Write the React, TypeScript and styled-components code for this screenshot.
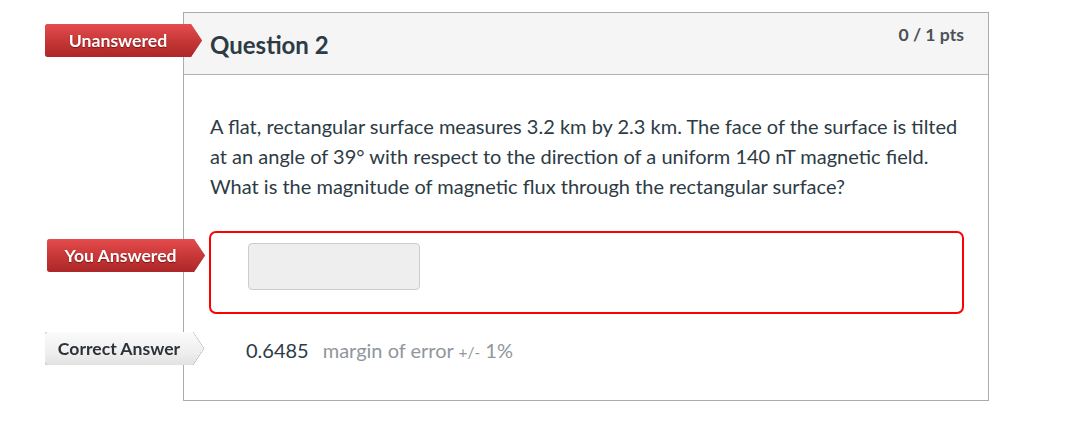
import React from "react";
import styled, { createGlobalStyle } from "styled-components";

const GlobalStyle = createGlobalStyle`
  html, body {
    margin: 0;
    padding: 0;
    background: #ffffff;
    font-family: Lato, "Open Sans", "Liberation Sans", sans-serif;
    color: #2d3b45;
  }
`;

const Page = styled.div`
  padding: 12px 0 0 183px;
`;

const QuestionBox = styled.div`
  width: 806px;
  box-sizing: border-box;
  border: 1px solid #ababab;
  background: #ffffff;
`;

const Header = styled.div`
  position: relative;
  height: 62px;
  box-sizing: border-box;
  background: #f5f5f5;
  border-bottom: 1px solid #b3b3b3;
  display: flex;
  justify-content: space-between;
  align-items: flex-start;
  padding: 0 24px 0 26px;
`;

const Title = styled.h2`
  margin: 0;
  padding-top: 17px;
  font-size: 24px;
  line-height: 30px;
  font-weight: 700;
  color: #2d3b45;
`;

const Points = styled.div`
  padding-top: 11px;
  font-size: 17.6px;
  line-height: 22px;
  font-weight: 700;
  color: #4a5258;
`;

const Tag = styled.div<{ $top: number; $left: number; $width: number; $variant: "red" | "gray" }>`
  position: absolute;
  top: ${(p) => p.$top}px;
  left: ${(p) => p.$left}px;
  width: ${(p) => p.$width}px;
  height: 33px;
  filter: ${(p) =>
    p.$variant === "gray"
      ? "drop-shadow(0 0 0.5px #777) drop-shadow(0 0 0.3px #999)"
      : "drop-shadow(0 0.5px 0.5px rgba(90,0,0,0.5))"};
`;

const TagShape = styled.div<{ $variant: "red" | "gray" }>`
  height: 100%;
  box-sizing: border-box;
  border-radius: 3px 0 0 3px;
  clip-path: polygon(0 0, calc(100% - 11px) 0, 100% 50%, calc(100% - 11px) 100%, 0 100%);
  background: ${(p) =>
    p.$variant === "red"
      ? "linear-gradient(#e54c4d, #c23434 60%, #ad2728)"
      : "linear-gradient(#fbfbfb, #efefef 60%, #e2e2e2)"};
  display: flex;
  align-items: center;
  padding-right: 11px;
`;

const TagText = styled.span<{ $variant: "red" | "gray" }>`
  flex: 1;
  text-align: center;
  font-size: 17.6px;
  font-weight: 700;
  color: ${(p) => (p.$variant === "red" ? "#ffffff" : "#2d3238")};
  text-shadow: ${(p) => (p.$variant === "red" ? "0 1px 1px rgba(80,0,0,0.6)" : "none")};
`;

const Body = styled.div`
  padding: 36px 0 33px 0;
`;

const QuestionText = styled.p`
  margin: 0 24px 0 26px;
  font-size: 20px;
  line-height: 30px;
  color: #2d3b45;
`;

const AnswerRow = styled.div`
  position: relative;
  margin-top: 30px;
  padding: 0 24px 0 25px;
`;

const AnswerBox = styled.div`
  height: 83px;
  box-sizing: border-box;
  border: 2px solid #ff0000;
  border-radius: 7px;
  padding: 10px 0 0 37px;
`;

const InputBox = styled.div`
  width: 172px;
  height: 47px;
  box-sizing: border-box;
  background: #eeeeee;
  border: 1px solid #cccccc;
  border-radius: 4px;
`;

const CorrectRow = styled.div`
  position: relative;
  margin-top: 19px;
  height: 34px;
  padding-left: 62px;
  display: flex;
  align-items: center;
  font-size: 20px;
`;

const Value = styled.span`
  color: #2d3b45;
  margin-right: 14px;
`;

const Margin = styled.span`
  color: #8f969c;
`;

const Small = styled.span`
  font-size: 15.4px;
`;

function Label({
  text,
  top,
  left,
  width,
  variant,
}: {
  text: string;
  top: number;
  left: number;
  width: number;
  variant: "red" | "gray";
}) {
  return (
    <Tag $top={top} $left={left} $width={width} $variant={variant}>
      <TagShape $variant={variant}>
        <TagText $variant={variant}>{text}</TagText>
      </TagShape>
    </Tag>
  );
}

export default function App() {
  return (
    <>
      <GlobalStyle />
      <Page>
        <QuestionBox>
          <Header>
            <Label text="Unanswered" top={11} left={-139} width={157} variant="red" />
            <Title>Question 2</Title>
            <Points>0 / 1 pts</Points>
          </Header>
          <Body>
            <QuestionText>
              A flat, rectangular surface measures 3.2 km by 2.3 km. The face of the surface is tilted
              <br />
              at an angle of 39° with respect to the direction of a uniform 140 nT magnetic field.
              <br />
              What is the magnitude of magnetic flux through the rectangular surface?
            </QuestionText>
            <AnswerRow>
              <Label text="You Answered" top={8} left={-137} width={158} variant="red" />
              <AnswerBox>
                <InputBox />
              </AnswerBox>
            </AnswerRow>
            <CorrectRow>
              <Label text="Correct Answer" top={-1} left={-139} width={159} variant="gray" />
              <Value>0.6485</Value>
              <Margin>
                margin of error <Small>+/-</Small> 1%
              </Margin>
            </CorrectRow>
          </Body>
        </QuestionBox>
      </Page>
    </>
  );
}
